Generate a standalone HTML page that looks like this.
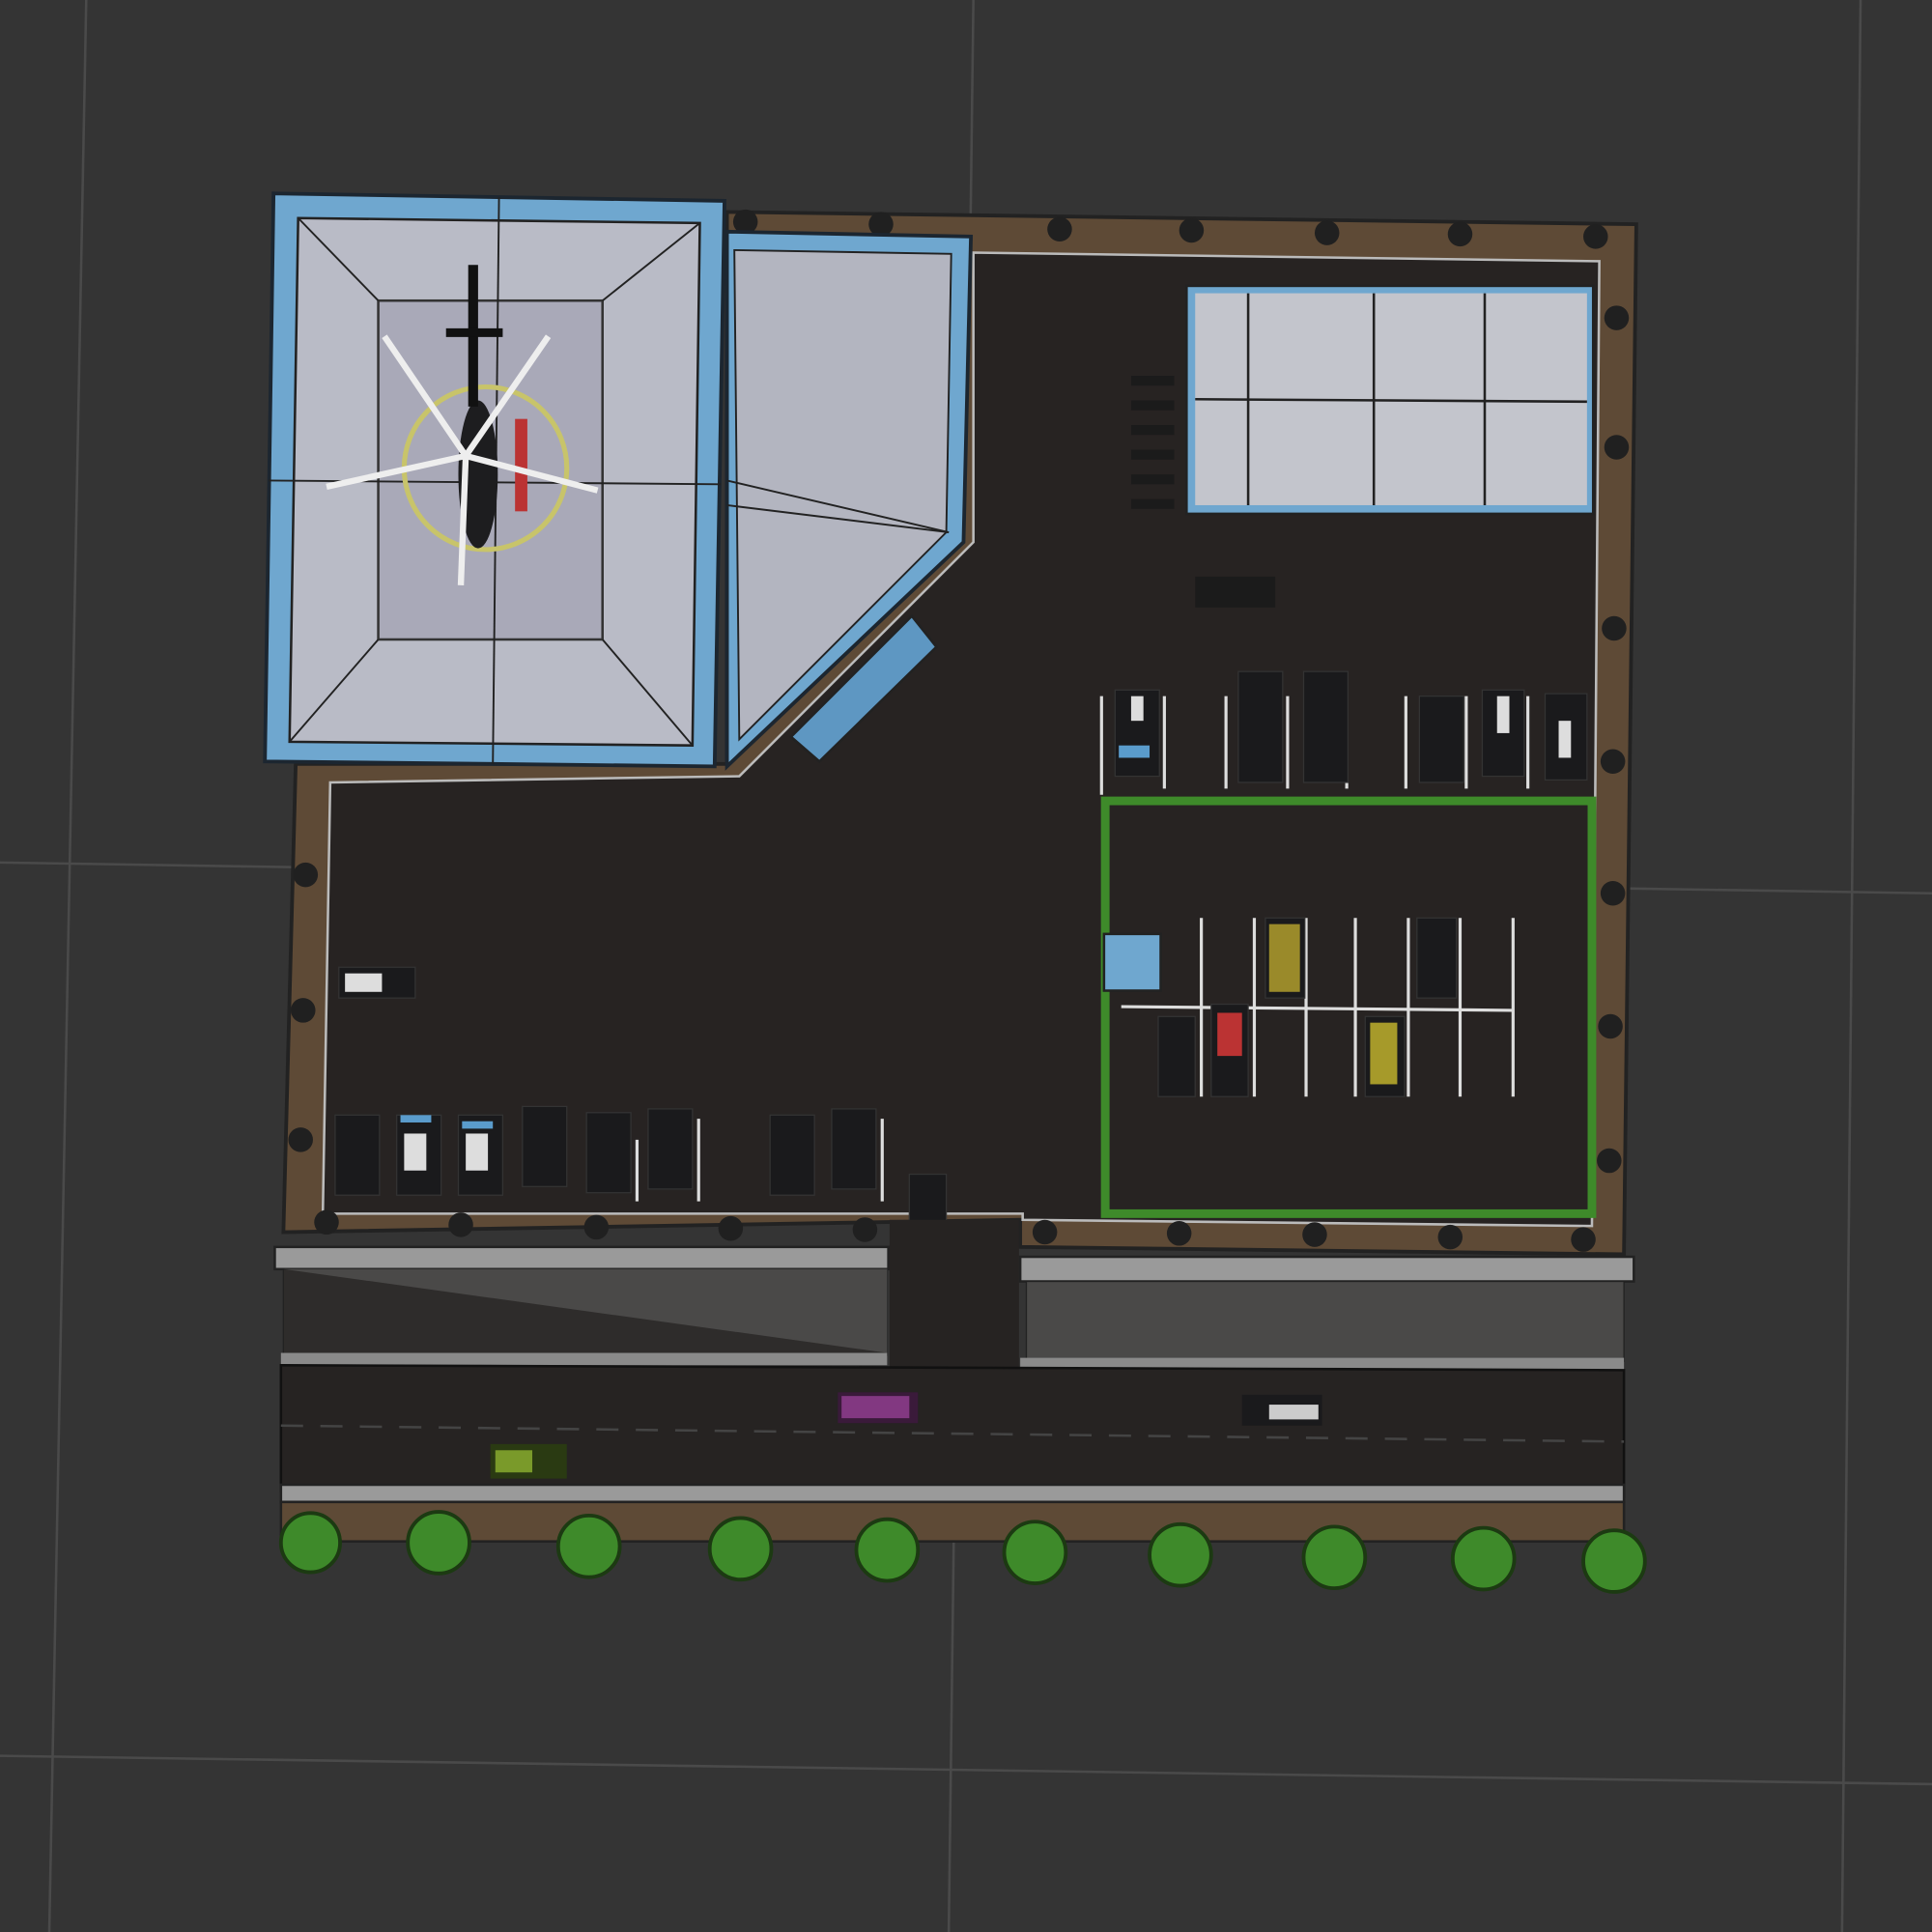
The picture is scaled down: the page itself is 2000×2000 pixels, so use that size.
<!DOCTYPE html>
<html><head><meta charset="utf-8"><style>
html,body{margin:0;padding:0;background:#333;}
svg{display:block;width:2000px;height:2000px;}
</style></head><body>
<svg viewBox="0 0 1568 1568" xmlns="http://www.w3.org/2000/svg">
<rect width="1568" height="1568" fill="#343434"/>
<!-- grid -->
<g stroke="#4a4a4a" stroke-width="2" fill="none">
<path d="M70 0 L40 1568"/><path d="M790 0 L770 1568"/><path d="M1510 0 L1495 1568"/>
<path d="M0 700 L1568 725"/><path d="M0 1425 L1568 1448"/>
</g>
<!-- lot brown base -->
<polygon points="590,172 1328,182 1318,1018 828,1012 828,990 230,1000 240,620 590,620" fill="#5e4a36" stroke="#222" stroke-width="3"/>
<!-- dark ground -->
<polygon points="790,205 1298,212 1292,995 830,990 830,985 262,985 268,635 600,630 790,440" fill="#272322" stroke="#bbb" stroke-width="2"/>
<!-- bushes -->
<g fill="#202020">
<circle cx="605" cy="180" r="10"/><circle cx="715" cy="182" r="10"/><circle cx="860" cy="186" r="10"/><circle cx="967" cy="187" r="10"/><circle cx="1077" cy="189" r="10"/><circle cx="1185" cy="190" r="10"/><circle cx="1295" cy="192" r="10"/>
<circle cx="1312" cy="258" r="10"/><circle cx="1312" cy="363" r="10"/><circle cx="1310" cy="510" r="10"/><circle cx="1309" cy="618" r="10"/><circle cx="1309" cy="725" r="10"/><circle cx="1307" cy="833" r="10"/><circle cx="1306" cy="942" r="10"/>
<circle cx="248" cy="710" r="10"/><circle cx="246" cy="820" r="10"/><circle cx="244" cy="925" r="10"/>
<circle cx="265" cy="992" r="10"/><circle cx="374" cy="994" r="10"/><circle cx="484" cy="996" r="10"/><circle cx="593" cy="997" r="10"/><circle cx="702" cy="998" r="10"/>
<circle cx="848" cy="1000" r="10"/><circle cx="957" cy="1001" r="10"/><circle cx="1067" cy="1002" r="10"/><circle cx="1177" cy="1004" r="10"/><circle cx="1285" cy="1006" r="10"/>
</g>
<!-- big building with heli -->
<polygon points="222,157 588,163 580,622 215,618" fill="#6fa7cf" stroke="#1c2630" stroke-width="3"/>
<polygon points="242,177 568,181 562,605 235,602" fill="#b9bbc6" stroke="#222" stroke-width="2"/>
<rect x="307" y="244" width="182" height="275" fill="#a9a9b8" stroke="#333" stroke-width="2"/>
<g stroke="#222" stroke-width="1.5">
<line x1="242" y1="177" x2="307" y2="244"/><line x1="568" y1="181" x2="489" y2="244"/><line x1="562" y1="605" x2="489" y2="519"/><line x1="235" y1="602" x2="307" y2="519"/>
<line x1="405" y1="160" x2="400" y2="620"/><line x1="218" y1="390" x2="585" y2="393"/>
</g>
<circle cx="394" cy="380" r="66" fill="none" stroke="#c8c46a" stroke-width="4"/>
<ellipse cx="388" cy="385" rx="16" ry="60" fill="#1d1d1f"/>
<rect x="418" y="340" width="10" height="75" fill="#b33"/>
<line x1="384" y1="215" x2="384" y2="330" stroke="#111" stroke-width="8"/>
<line x1="362" y1="270" x2="408" y2="270" stroke="#111" stroke-width="7"/>
<g stroke="#eee" stroke-width="5"><line x1="378" y1="370" x2="265" y2="395"/><line x1="378" y1="370" x2="485" y2="398"/><line x1="378" y1="370" x2="312" y2="273"/><line x1="378" y1="370" x2="445" y2="273"/><line x1="378" y1="370" x2="374" y2="475"/></g>
<!-- second roof -->
<polygon points="590,188 788,192 782,440 590,622" fill="#6fa7cf" stroke="#1c2630" stroke-width="3"/>
<polygon points="596,203 772,206 768,432 600,600" fill="#b3b5c0" stroke="#222" stroke-width="1.5"/>
<line x1="590" y1="390" x2="770" y2="432" stroke="#222" stroke-width="1.5"/>
<line x1="590" y1="410" x2="770" y2="432" stroke="#222" stroke-width="1.5"/>
<polygon points="740,500 760,525 665,618 642,598" fill="#5e97c2" stroke="#222" stroke-width="2"/>
<!-- top right building -->
<rect x="963" y="232" width="330" height="185" fill="#6fa7cf" stroke="#222" stroke-width="2"/>
<rect x="970" y="238" width="318" height="172" fill="#c3c5cc"/>
<g stroke="#222" stroke-width="2"><line x1="1013" y1="238" x2="1013" y2="410"/><line x1="1115" y1="238" x2="1115" y2="410"/><line x1="1205" y1="238" x2="1205" y2="410"/><line x1="970" y1="324" x2="1288" y2="326"/></g>
<g fill="#1b1b1b"><rect x="918" y="305" width="35" height="8"/><rect x="918" y="325" width="35" height="8"/><rect x="918" y="345" width="35" height="8"/><rect x="918" y="365" width="35" height="8"/><rect x="918" y="385" width="35" height="8"/><rect x="918" y="405" width="35" height="8"/><rect x="970" y="468" width="65" height="25"/></g>
<!-- green fence area -->
<rect x="897" y="650" width="395" height="335" fill="none" stroke="#3e8a2a" stroke-width="7"/>
<rect x="896" y="758" width="46" height="46" fill="#6fa7cf" stroke="#222" stroke-width="2"/>
<!-- parking lines -->
<g stroke="#ddd" stroke-width="2.5">
<line x1="894" y1="565" x2="894" y2="645"/><line x1="945" y1="565" x2="945" y2="640"/><line x1="995" y1="565" x2="995" y2="640"/><line x1="1045" y1="565" x2="1045" y2="640"/><line x1="1093" y1="565" x2="1093" y2="640"/><line x1="1141" y1="565" x2="1141" y2="640"/><line x1="1190" y1="565" x2="1190" y2="640"/><line x1="1240" y1="565" x2="1240" y2="640"/>
<line x1="975" y1="745" x2="975" y2="890"/><line x1="1018" y1="745" x2="1018" y2="890"/><line x1="1060" y1="745" x2="1060" y2="890"/><line x1="1100" y1="745" x2="1100" y2="890"/><line x1="1143" y1="745" x2="1143" y2="890"/><line x1="1185" y1="745" x2="1185" y2="890"/><line x1="1228" y1="745" x2="1228" y2="890"/>
<line x1="910" y1="817" x2="1228" y2="820"/>
<line x1="517" y1="925" x2="517" y2="975"/><line x1="567" y1="908" x2="567" y2="975"/><line x1="716" y1="908" x2="716" y2="975"/>
</g>
<!-- cars -->
<g fill="#1a1a1c" stroke="#333" stroke-width="1">
<rect x="905" y="560" width="36" height="70"/><rect x="1005" y="545" width="36" height="90"/><rect x="1058" y="545" width="36" height="90"/><rect x="1152" y="565" width="36" height="70"/><rect x="1203" y="560" width="34" height="70"/><rect x="1254" y="563" width="34" height="70"/>
<rect x="940" y="825" width="30" height="65"/><rect x="983" y="815" width="30" height="75"/><rect x="1027" y="745" width="32" height="65"/><rect x="1108" y="825" width="32" height="65"/><rect x="1150" y="745" width="32" height="65"/>
<rect x="272" y="905" width="36" height="65"/><rect x="322" y="905" width="36" height="65"/><rect x="372" y="905" width="36" height="65"/><rect x="424" y="898" width="36" height="65"/><rect x="476" y="903" width="36" height="65"/><rect x="526" y="900" width="36" height="65"/><rect x="625" y="905" width="36" height="65"/><rect x="675" y="900" width="36" height="65"/><rect x="738" y="953" width="30" height="65"/>
<rect x="275" y="785" width="62" height="25"/>
</g>
<g fill="#ddd"><rect x="918" y="565" width="10" height="20"/><rect x="1215" y="565" width="10" height="30"/><rect x="1265" y="585" width="10" height="30"/><rect x="328" y="920" width="18" height="30"/><rect x="378" y="920" width="18" height="30"/><rect x="280" y="790" width="30" height="15"/></g>
<g fill="#5a9ccc"><rect x="325" y="905" width="25" height="6"/><rect x="375" y="910" width="25" height="6"/><rect x="908" y="605" width="25" height="10"/></g>
<rect x="988" y="822" width="20" height="35" fill="#b33"/>
<rect x="1030" y="750" width="25" height="55" fill="#9a8a2a"/>
<rect x="1112" y="830" width="22" height="50" fill="#a69a2a"/>
<!-- driveway -->
<rect x="722" y="990" width="105" height="120" fill="#262322"/>
<!-- lower sidewalk blocks -->
<rect x="223" y="1012" width="498" height="18" fill="#9a9a9a" stroke="#222" stroke-width="2"/>
<polygon points="230,1030 720,1030 720,1100 230,1100" fill="#2e2c2b" stroke="#222"/>
<polygon points="230,1030 720,1030 720,1098" fill="#4a4948"/>
<rect x="828" y="1020" width="498" height="20" fill="#9a9a9a" stroke="#222" stroke-width="2"/>
<rect x="833" y="1040" width="485" height="65" fill="#4a4948" stroke="#222"/>
<rect x="228" y="1098" width="492" height="10" fill="#8a8a8a"/>
<rect x="828" y="1102" width="490" height="10" fill="#8a8a8a"/>
<!-- road -->
<polygon points="228,1108 1318,1112 1318,1215 228,1210" fill="#262322" stroke="#111" stroke-width="2"/>
<line x1="228" y1="1157" x2="1318" y2="1170" stroke="#444" stroke-width="2" stroke-dasharray="18,14"/>
<rect x="228" y="1205" width="1090" height="14" fill="#9a9a9a" stroke="#222" stroke-width="2"/>
<rect x="228" y="1219" width="1090" height="32" fill="#5e4a36" stroke="#222" stroke-width="2"/>
<rect x="680" y="1130" width="65" height="25" fill="#3a1a3a"/><rect x="683" y="1133" width="55" height="18" fill="#b34cb0" opacity="0.6"/>
<rect x="398" y="1172" width="62" height="28" fill="#2a3a12"/><rect x="402" y="1177" width="30" height="18" fill="#7a9a2a"/>
<rect x="1008" y="1132" width="65" height="25" fill="#1a1a1c"/><rect x="1030" y="1140" width="40" height="12" fill="#ccc"/>
<!-- trees -->
<g fill="#3e8a2a" stroke="#1c3a12" stroke-width="3">
<circle cx="252" cy="1252" r="24"/><circle cx="356" cy="1252" r="25"/><circle cx="478" cy="1255" r="25"/><circle cx="601" cy="1257" r="25"/><circle cx="720" cy="1258" r="25"/><circle cx="840" cy="1260" r="25"/><circle cx="958" cy="1262" r="25"/><circle cx="1083" cy="1264" r="25"/><circle cx="1204" cy="1265" r="25"/><circle cx="1310" cy="1267" r="25"/>
</g>
</svg>
</body></html>
